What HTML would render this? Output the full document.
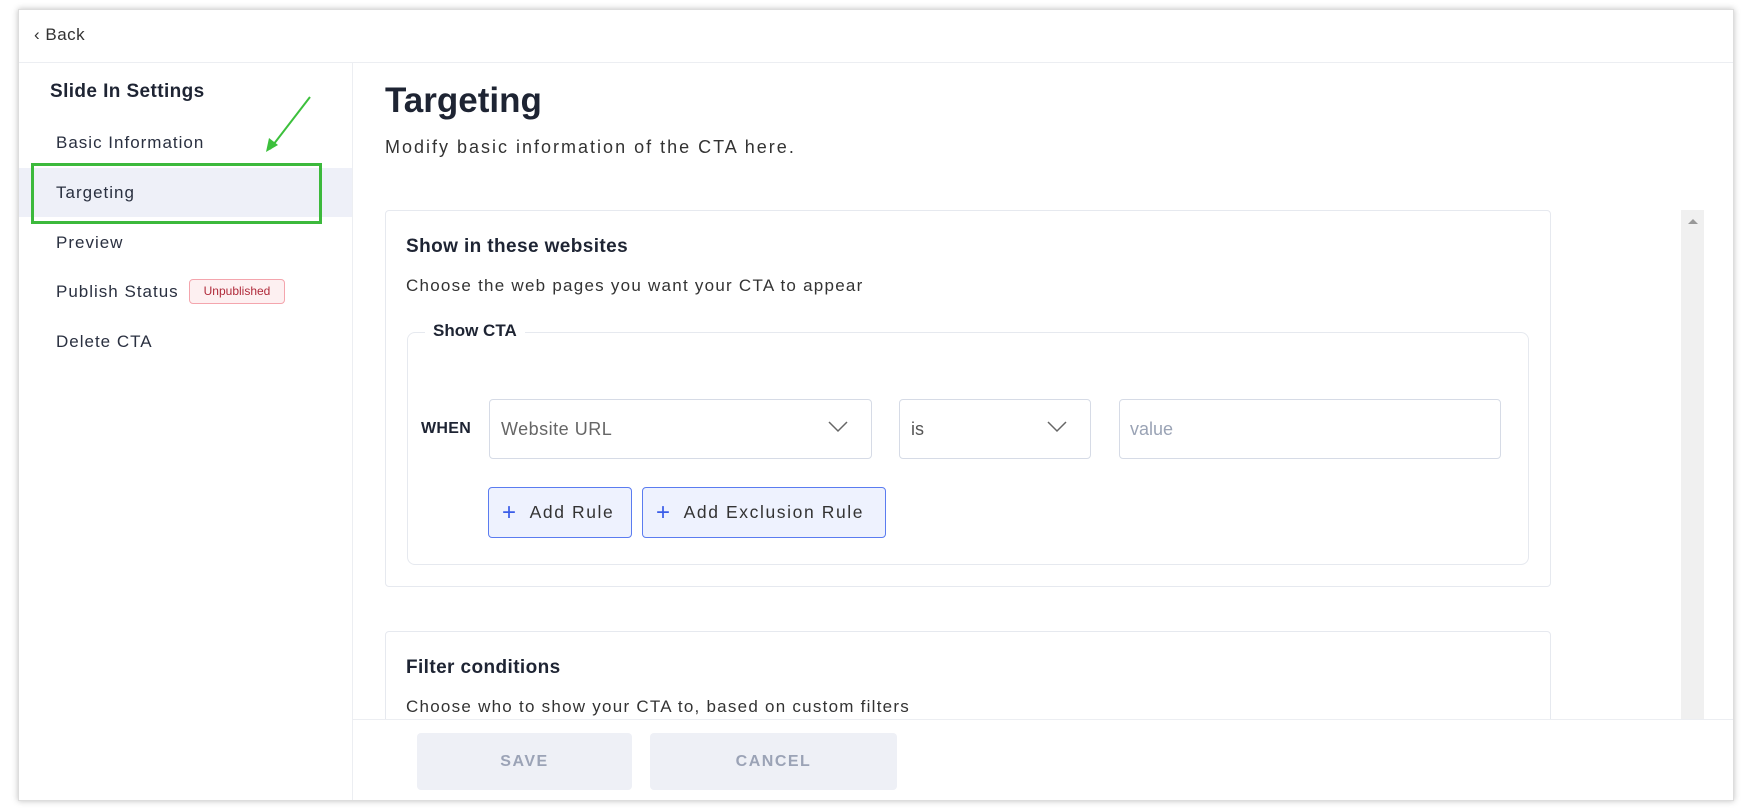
<!DOCTYPE html>
<html><head><style>
*{box-sizing:border-box;margin:0;padding:0}
body{width:1754px;height:810px;background:#fff;font-family:"Liberation Sans",sans-serif;color:#1e2433;position:relative;overflow:hidden}
.a{position:absolute;white-space:nowrap}
.frame{left:18px;top:9px;width:1716px;height:792px;border:1px solid #ddd;box-shadow:0 0 6px rgba(0,0,0,.25);background:#fff}
.item{left:56px;font-size:17px;color:#2a3040;letter-spacing:1px}
.sel{border:1px solid #d6dbe6;border-radius:4px;background:#fff}
.btn{border:1px solid #5b7cf0;border-radius:4px;background:#eef2fe;font-size:17.5px;color:#333;letter-spacing:1.6px}
.gbtn{background:#eef0f6;border-radius:4px;font-size:16px;font-weight:bold;color:#9ba3b6;letter-spacing:1.5px;display:flex;align-items:center;justify-content:center}
</style></head><body>
<div class="a frame"></div>
<div class="a" style="left:19px;top:62px;width:1714px;height:1px;background:#eceef2"></div>
<div class="a" style="left:34px;top:25px;font-size:17px;color:#333;letter-spacing:.5px">‹ Back</div>
<div class="a" style="left:352px;top:63px;width:1px;height:737px;background:#eceef2"></div>
<div class="a" style="left:50px;top:81px;font-size:19px;font-weight:bold;letter-spacing:.4px">Slide In Settings</div>
<div class="a" style="left:19px;top:168px;width:333px;height:49px;background:#eef0f8"></div>
<div class="a" style="left:31px;top:163px;width:291px;height:61px;border:3px solid #3cb93c"></div>
<svg class="a" style="left:262px;top:94px" width="54" height="62"><path d="M48 3 L8 55" stroke="#3cc03c" stroke-width="2"/><path d="M4 58 L7 44 L16 51 Z" fill="#3cc03c"/></svg>
<div class="a item" style="top:133px">Basic Information</div>
<div class="a item" style="top:183px">Targeting</div>
<div class="a item" style="top:233px">Preview</div>
<div class="a item" style="top:282px">Publish Status</div>
<div class="a" style="left:189px;top:279px;width:96px;height:25px;border:1px solid #f4a5ad;background:#fdf0f1;border-radius:4px;font-size:12px;color:#b02a3a;text-align:center;line-height:23px">Unpublished</div>
<div class="a item" style="top:332px">Delete CTA</div>
<div class="a" style="left:385px;top:81px;font-size:35px;font-weight:bold">Targeting</div>
<div class="a" style="left:385px;top:137px;font-size:18px;color:#333;letter-spacing:2px">Modify basic information of the CTA here.</div>
<div class="a" style="left:385px;top:210px;width:1166px;height:377px;border:1px solid #e6e9ef;border-radius:4px"></div>
<div class="a" style="left:406px;top:236px;font-size:19px;font-weight:bold;letter-spacing:.4px">Show in these websites</div>
<div class="a" style="left:406px;top:276px;font-size:17px;color:#333;letter-spacing:1.25px">Choose the web pages you want your CTA to appear</div>
<div class="a" style="left:407px;top:332px;width:1122px;height:233px;border:1px solid #e6e9ef;border-radius:8px"></div>
<div class="a" style="left:425px;top:321px;padding:0 8px;background:#fff;font-size:17px;font-weight:bold">Show CTA</div>
<div class="a" style="left:421px;top:420px;font-size:16px;font-weight:bold;letter-spacing:.3px">WHEN</div>
<div class="a sel" style="left:489px;top:399px;width:383px;height:60px"></div>
<div class="a" style="left:501px;top:419px;font-size:18px;color:#666;letter-spacing:.5px">Website URL</div>
<svg class="a" style="left:828px;top:421px" width="20" height="12"><path d="M1 1 L10 10 L19 1" stroke="#666" fill="none" stroke-width="1.5"/></svg>
<div class="a sel" style="left:899px;top:399px;width:192px;height:60px"></div>
<div class="a" style="left:911px;top:419px;font-size:18px;color:#555">is</div>
<svg class="a" style="left:1047px;top:421px" width="20" height="12"><path d="M1 1 L10 10 L19 1" stroke="#666" fill="none" stroke-width="1.5"/></svg>
<div class="a sel" style="left:1119px;top:399px;width:382px;height:60px"></div>
<div class="a" style="left:1130px;top:419px;font-size:18px;color:#9aa3b5">value</div>
<div class="a btn" style="left:488px;top:487px;width:144px;height:51px;line-height:49px;padding-left:13px"><span style="color:#3a5de8;font-size:24px;vertical-align:-2px">+</span>&nbsp; Add Rule</div>
<div class="a btn" style="left:642px;top:487px;width:244px;height:51px;line-height:49px;padding-left:13px"><span style="color:#3a5de8;font-size:24px;vertical-align:-2px">+</span>&nbsp; Add Exclusion Rule</div>
<div class="a" style="left:385px;top:631px;width:1166px;height:120px;border:1px solid #e6e9ef;border-radius:4px"></div>
<div class="a" style="left:406px;top:657px;font-size:19px;font-weight:bold;letter-spacing:.4px">Filter conditions</div>
<div class="a" style="left:406px;top:697px;font-size:17px;color:#333;letter-spacing:1.25px">Choose who to show your CTA to, based on custom filters</div>
<div class="a" style="left:1681px;top:210px;width:23px;height:510px;background:#f0f0f0"></div>
<svg class="a" style="left:1688px;top:218px" width="10" height="7"><path d="M0 6 L5 1 L10 6Z" fill="#999"/></svg>
<div class="a" style="left:353px;top:719px;width:1380px;height:81px;background:#fff;border-top:1px solid #eceef2"></div>
<div class="a gbtn" style="left:417px;top:733px;width:215px;height:57px">SAVE</div>
<div class="a gbtn" style="left:650px;top:733px;width:247px;height:57px">CANCEL</div>
</body></html>
